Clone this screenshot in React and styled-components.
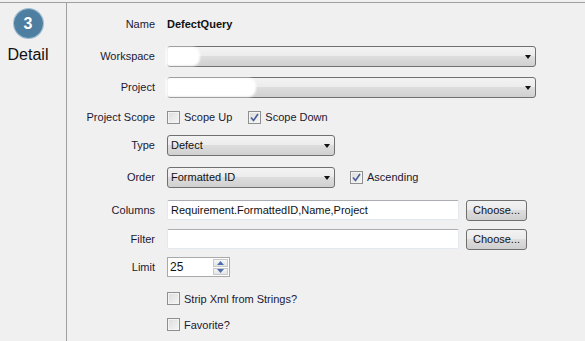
import styled, { createGlobalStyle } from 'styled-components';

const Global = createGlobalStyle`
    html, body {
        margin: 0;
        padding: 0;
        background: #f0f0f0;
    }
    body {
        font-family: "Liberation Sans", Arial, sans-serif;
        font-size: 11px;
        color: #1c1830;
    }
`;

const Page = styled.div`
    width: 585px;
    height: 339px;
    margin-top: 2px;
    border-top: 1px solid #a0a0a0;
    display: flex;
    overflow: hidden;
`;

const Side = styled.div`
    width: 67px;
    border-right: 1px solid #a0a0a0;
    display: flex;
    flex-direction: column;
    align-items: center;
    padding: 6px 10px 0 0;
    box-sizing: border-box;
`;

const StepBadge = styled.div`
    width: 29px;
    height: 29px;
    border-radius: 50%;
    background: radial-gradient(circle, #4b7b9e 0%, #4f80a2 70%, #6f9dbd 100%);
    box-shadow: 0 0 0 1px #9dbdd3;
    color: #fff;
    font-weight: bold;
    font-size: 16px;
    display: flex;
    align-items: center;
    justify-content: center;
`;

const StepTitle = styled.div`
    margin-top: 8px;
    font-size: 16px;
    color: #111;
`;

const Form = styled.div`
    display: grid;
    grid-template-columns: 88px auto;
    grid-template-rows: 32px 32px 30px 30px 26px 38px 28px 30px 26px 37px 15px;
    column-gap: 12px;
    padding-top: 5px;
    align-items: center;
`;

const Label = styled.div`
    text-align: right;
    white-space: nowrap;
`;

const Field = styled.div`
    display: flex;
    align-items: center;
    gap: ${p => p.$gap || 0}px;
`;

const Value = styled.div`
    font-weight: bold;
    color: #111;
`;

const Combo = styled.div`
    position: relative;
    width: ${p => p.$w}px;
    height: 21px;
    box-sizing: border-box;
    border: 1px solid #707070;
    border-radius: 3px;
    background: linear-gradient(#f3f3f3 0%, #ececec 45%, #dddddd 50%, #d0d0d0 100%);
    display: flex;
    align-items: center;
    padding-left: 3px;
    color: #111;
`;

const Arrow = styled.span`
    position: absolute;
    right: 4px;
    top: 8px;
    width: 0;
    height: 0;
    border-left: 3.5px solid transparent;
    border-right: 3.5px solid transparent;
    border-top: 4px solid #111;
`;

const Redact = styled.span`
    position: absolute;
    left: -2px;
    top: 0;
    width: ${p => p.$w}px;
    height: 19px;
    background: #fff;
    border-radius: 0 8px 8px 0;
    filter: blur(1px);
`;

const TextBox = styled.div`
    width: ${p => p.$w}px;
    height: 20px;
    box-sizing: border-box;
    background: #fff;
    border: 1px solid #e3e9ef;
    border-top-color: #abadb3;
    border-radius: 2px;
    display: flex;
    align-items: center;
    padding-left: 3px;
    color: #111;
`;

const Button = styled.div`
    width: 61px;
    height: 21px;
    box-sizing: border-box;
    border: 1px solid #707070;
    border-radius: 3px;
    background: linear-gradient(#f2f2f2 0%, #ebebeb 45%, #dddddd 50%, #cfcfcf 100%);
    display: flex;
    align-items: center;
    justify-content: center;
    color: #111;
`;

const Spin = styled.div`
    width: 63px;
    height: 20px;
    box-sizing: border-box;
    background: #fff;
    border: 1px solid #a9a9a9;
    display: flex;
    align-items: center;
    justify-content: space-between;
    padding: 1px 1px 1px 2px;
    color: #111;
    font-size: 12px;
`;

const SpinButtons = styled.div`
    width: 15px;
    height: 16px;
    display: flex;
    flex-direction: column;
    gap: 1px;
`;

const SpinButton = styled.div`
    flex: 1;
    border: 1px solid #c9c9c9;
    background: linear-gradient(#f6f6f6, #e4e4e4);
    display: flex;
    align-items: center;
    justify-content: center;
`;

const Check = styled.label`
    display: flex;
    align-items: center;
    gap: 4px;
    color: #1c1830;
`;

const Box = styled.span`
    width: 13px;
    height: 13px;
    box-sizing: border-box;
    border: 1px solid #8e8f8f;
    background: linear-gradient(135deg, #dcdcdc, #f6f6f6);
    box-shadow: inset 0 0 0 1px #f4f4f4;
    display: flex;
    align-items: center;
    justify-content: center;
`;

function CheckBox({ checked, children }) {
    return (
        <Check>
            <Box>
                {checked && (
                    <svg width="9" height="9" viewBox="0 0 9 9">
                        <path d="M1 4.5 L3.5 7.5 L8 1" fill="none" stroke="#4a5d99" strokeWidth="1.6" />
                    </svg>
                )}
            </Box>
            {children}
        </Check>
    );
}

function Tri({ up }) {
    return (
        <svg width="7" height="4" viewBox="0 0 7 4">
            <path d={up ? 'M0 4 L3.5 0 L7 4 Z' : 'M0 0 L3.5 4 L7 0 Z'} fill="#4d6fae" />
        </svg>
    );
}

export default function App() {
    return (
        <>
            <Global />
            <Page>
                <Side>
                    <StepBadge>3</StepBadge>
                    <StepTitle>Detail</StepTitle>
                </Side>
                <Form>
                    <Label>Name</Label>
                    <Value>DefectQuery</Value>

                    <Label>Workspace</Label>
                    <Field>
                        <Combo $w={369}><Redact $w={34} /><Arrow /></Combo>
                    </Field>

                    <Label>Project</Label>
                    <Field>
                        <Combo $w={369}><Redact $w={90} /><Arrow /></Combo>
                    </Field>

                    <Label>Project Scope</Label>
                    <Field $gap={16}>
                        <CheckBox>Scope Up</CheckBox>
                        <CheckBox checked>Scope Down</CheckBox>
                    </Field>

                    <Label>Type</Label>
                    <Field>
                        <Combo $w={168}>Defect<Arrow /></Combo>
                    </Field>

                    <Label>Order</Label>
                    <Field $gap={15}>
                        <Combo $w={168}>Formatted ID<Arrow /></Combo>
                        <CheckBox checked>Ascending</CheckBox>
                    </Field>

                    <Label>Columns</Label>
                    <Field $gap={7}>
                        <TextBox $w={292}>Requirement.FormattedID,Name,Project</TextBox>
                        <Button>Choose...</Button>
                    </Field>

                    <Label>Filter</Label>
                    <Field $gap={7}>
                        <TextBox $w={292} />
                        <Button>Choose...</Button>
                    </Field>

                    <Label>Limit</Label>
                    <Field>
                        <Spin>
                            25
                            <SpinButtons>
                                <SpinButton><Tri up /></SpinButton>
                                <SpinButton><Tri /></SpinButton>
                            </SpinButtons>
                        </Spin>
                    </Field>

                    <span />
                    <CheckBox>Strip Xml from Strings?</CheckBox>

                    <span />
                    <CheckBox>Favorite?</CheckBox>
                </Form>
            </Page>
        </>
    );
}
